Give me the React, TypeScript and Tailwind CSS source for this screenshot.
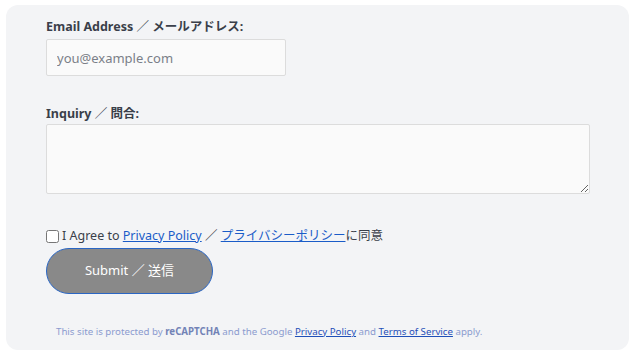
import React from "react";

export default function App() {
  const font = { fontFamily: '"Noto Sans", "Noto Sans CJK JP", sans-serif' };
  return (
    <div className="w-[640px] h-[360px] bg-white pt-[5px] pl-[6px]" style={font}>
      <div className="w-[623px] h-[345px] rounded-[12px] bg-[#f3f4f6] pt-[13px] px-[40px] flex flex-col">
        <label className="text-[12.5px] leading-[18px] font-bold text-[#3a3f4a]">
          Email Address ／ メールアドレス:
        </label>
        <input
          type="email"
          placeholder="you@example.com"
          className="mt-[3px] w-[240px] h-[37px] border border-[#dcdcdc] bg-[#fafafa] px-[10px] text-[13px] text-[#333] placeholder:text-[#7a7f88] outline-none rounded-[2px]"
        />
        <label className="mt-[29px] text-[12.5px] leading-[18px] font-bold text-[#3a3f4a]">
          Inquiry ／ 問合:
        </label>
        <textarea className="mt-[1px] w-[544px] h-[70px] border border-[#dcdcdc] bg-[#fafafa] rounded-[2px] outline-none" />
        <div className="mt-[33px] flex items-center text-[12.5px] leading-[18px] text-[#3a3f4a]">
          <input type="checkbox" className="w-[13px] h-[13px] mr-[3px] m-0" />
          <span>
            I Agree to{" "}
            <a href="#" className="text-[#1a5cc8] underline">Privacy Policy</a>
            {" "}／{" "}
            <a href="#" className="text-[#1a5cc8] underline">プライバシーポリシー</a>
            に同意
          </span>
        </div>
        <button className="mt-[3px] w-[167px] h-[46px] rounded-full bg-[#898989] border border-[#2a66c4] text-white text-[13px]">
          Submit ／ 送信
        </button>
        <p className="mt-[31px] pl-[10px] text-[9.7px] leading-[14px] text-[#8b9bcf]">
          This site is protected by <b className="text-[#7283b6]">reCAPTCHA</b> and the Google{" "}
          <a href="#" className="text-[#1f4fb8] underline">Privacy Policy</a> and{" "}
          <a href="#" className="text-[#1f4fb8] underline">Terms of Service</a> apply.
        </p>
      </div>
    </div>
  );
}
